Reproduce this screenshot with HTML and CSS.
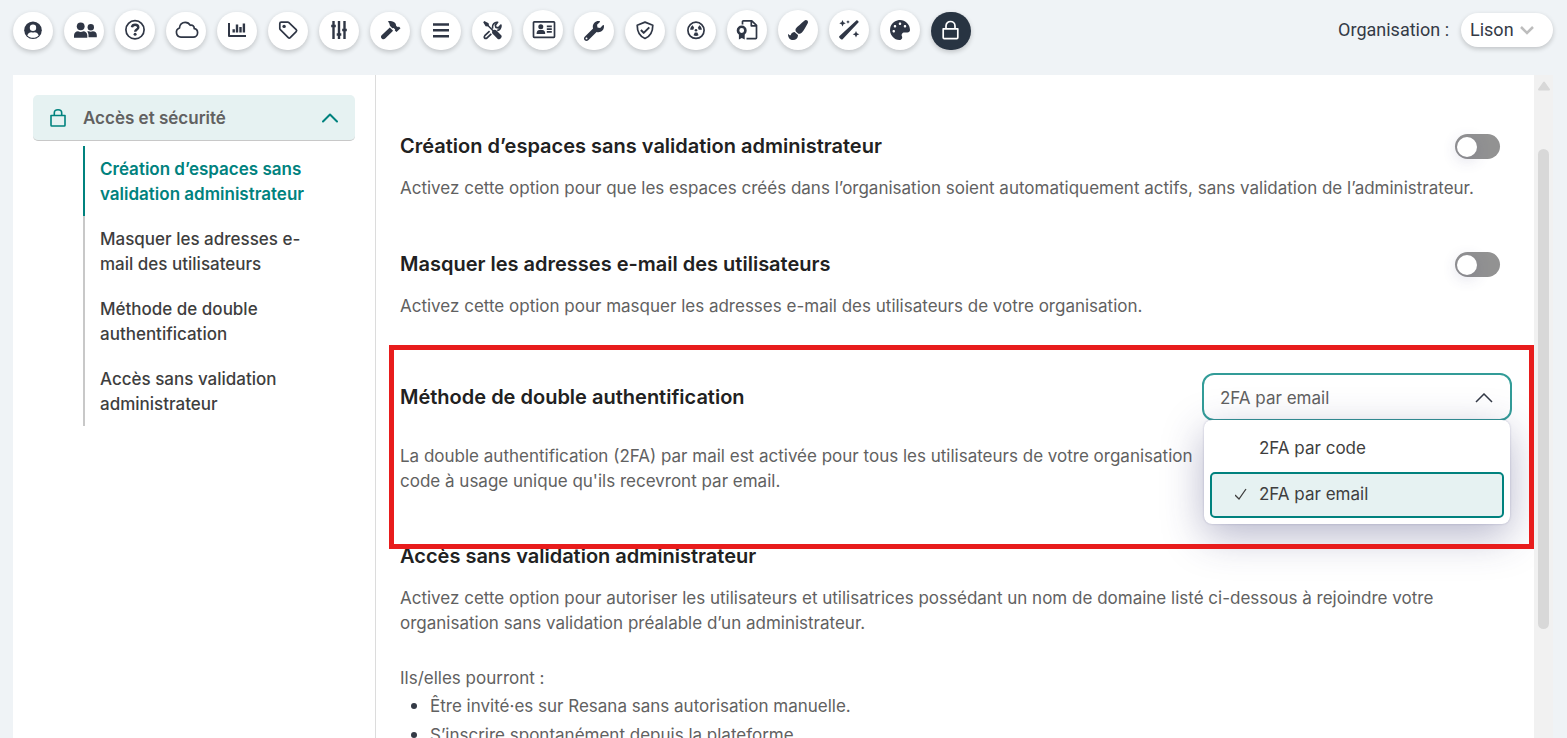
FILE: index.html
```html
<!DOCTYPE html>
<html lang="fr">
<head>
  <meta charset="UTF-8">
  <meta name="viewport" content="width=device-width, initial-scale=1">
  <title>Accès et sécurité</title>
  <link rel="stylesheet" href="styles.css">
</head>
<body>
  <header class="topbar">
    <nav class="tools">
      <a class="tool" href="#" aria-label="Profil"><svg viewBox="0 0 24 24"><circle cx="12" cy="11.3" r="8.8"/><circle class="hole" cx="12" cy="8.8" r="3.2"/><path class="hole" d="M6.3 16.4c.7-2 2.300-3.100 4-3.100.6.200 1.100.300 1.700.300s1.100-.1 1.700-.3c1.700 0 3.300 1.100 4 3.100-1.500 1.500-3.500 2.300-5.700 2.300s-4.200-.8-5.700-2.300z"/></svg></a>
      <a class="tool" href="#" aria-label="Utilisateurs"><svg viewBox="0 0 24 24"><circle cx="8.7" cy="7.300" r="3.900"/><circle cx="18.800" cy="8.200" r="3.200"/><path d="M2 18.700v-2.200c0-2.300 1.800-4.200 4.100-4.200 1.600.8 3.600.8 5.200 0 2.300 0 4 1.900 4 4.200v2.200zM16.500 18.300v-2c0-1.500-.5-2.800-1.300-3.800.5-.2.900-.3 1.400-.3 1.300.6 3 .6 4.300 0 2.200 0 3.900 1.700 3.900 3.900v2.200z"/></svg></a>
      <a class="tool tool-tall" href="#" aria-label="Aide"><svg viewBox="0 0 24 24"><g class="line"><circle cx="12" cy="11.800" r="9.100"/><path class="bold" d="M8.900 9.200c.3-1.500 1.600-2.500 3.200-2.500 1.800 0 3.200 1 3.200 2.700 0 2-3.100 2.200-3.100 4.300"/></g><circle cx="12.100" cy="16.300" r="1.500"/></svg></a>
      <a class="tool" href="#" aria-label="Nuage"><svg viewBox="0 0 24 24"><path class="line" d="M7 18.100a4.700 4.700 0 0 1-1.500-9.100c0-3.200 2.600-5.700 5.700-5.700 2.200 0 4.100 1.200 5.100 3 2.300-.6 4.200 1 3.900 3.400 2 .3 3.400 2 3.400 4 0 2.500-2 4.400-4.400 4.400z"/></svg></a>
      <a class="tool" href="#" aria-label="Statistiques"><svg viewBox="0 0 24 24"><path class="thick" d="M4 4v13h17"/><path class="bold" d="M8.700 13.500v-3.300M12 13.500v-8M15.500 13.500V8M18.900 13.500v-9"/></svg></a>
      <a class="tool" href="#" aria-label="Étiquettes"><svg viewBox="0 0 24 24"><path class="line" d="M3.800 4.500c0-.9.500-1.400 1.400-1.400h6.500c.5 0 .9.200 1.200.5l7.300 7.100c.6.600.6 1.300 0 1.900l-6 6c-.6.600-1.300.6-1.900 0l-8-7.900c-.3-.3-.5-.7-.5-1.100z"/><circle cx="8.100" cy="7.400" r="1.700"/></svg></a>
      <a class="tool" href="#" aria-label="Réglages"><svg viewBox="0 0 24 24"><path class="bold" d="M6.500 2v18M12 2v18M17.500 2v18M4.200 7h4.600M9.700 15.500h4.600M15.200 11h4.600"/></svg></a>
      <a class="tool" href="#" aria-label="Marteau"><svg viewBox="0 0 24 24"><path d="M9.800 2.400c3-.9 6.100-.2 7.900 2.300l.5 2.300 1.900 1.200.8-.6 1.600 1.600-4 3.900-1.700-1.500.4-1-1.600-1.500-1.300.1-2.400-2.500c-.2-2-.9-3.300-2.100-4.300z"/><path d="M11.800 8.500l3.300 3.200-8.200 8.100c-2.200 1.500-5-1.100-3.500-3.300z"/></svg></a>
      <a class="tool" href="#" aria-label="Liste"><svg viewBox="0 0 24 24"><path class="bars" d="M4 5.500h16M4 11.300h16M4 17.200h16"/></svg></a>
      <a class="tool" href="#" aria-label="Outils"><svg viewBox="0 0 24 24"><path d="M4.300 2l4.300 2.200.4 2.300 4.400 4.500c1-.5 2.300-.3 3.100.5l4.700 4.700c1.800 1.800-1.900 5.400-3.700 3.600l-4.600-4.700c-.9-.9-1.100-2.100-.6-3.100L7.900 7.500l-2.300-.3L3.200 3.300z"/><path class="line" d="M12.800 9.600l-.3-.8c-.5-2.900 2-6 5.100-5.500l-2.300 2.800.6 2.200 2.500.6 2.500-2.700c.4 2.700-1.300 4.900-3.700 5.200M9.600 12.200l-4.800 4.500c-1.400 1.600 0 3.300 2 2.500l4.500-4.400"/></svg></a>
      <a class="tool tool-tall" href="#" aria-label="Contacts"><svg viewBox="0 0 24 24"><rect class="line" x="2.500" y="3.800" width="21" height="15.500" rx=".7"/><circle cx="9.800" cy="8.800" r="2.500"/><path d="M5.600 15.900c-.1-2.500 1.100-3.900 2.900-3.900h2.800c1.800 0 3 1.400 2.900 3.900z"/><path class="line" d="M15.800 8.300h5M15.800 11.100h5M15.800 13.900h5"/></svg></a>
      <a class="tool" href="#" aria-label="Maintenance"><svg class="solid" viewBox="0 0 512 512"><path d="M507.730 109.100c-2.240-9.030-13.540-12.090-20.120-5.510l-74.360 74.360-67.880-11.310-11.310-67.880 74.360-74.360c6.620-6.620 3.430-17.900-5.660-20.160-47.380-11.740-99.550.91-136.580 37.930-39.640 39.640-50.550 97.100-34.050 147.200L18.740 402.760c-24.990 24.990-24.990 65.510 0 90.500 24.990 24.990 65.510 24.990 90.500 0l213.210-213.210c50.120 16.710 107.470 5.680 147.370-34.220 37.070-37.070 49.700-89.320 37.910-136.730zM64 472c-13.250 0-24-10.750-24-24 0-13.260 10.750-24 24-24s24 10.740 24 24c0 13.250-10.750 24-24 24z"/></svg></a>
      <a class="tool" href="#" aria-label="Protection"><svg viewBox="0 0 24 24"><path class="line" d="M12 3.100l7.800 3.100c0 6.100-2.800 11.200-7.800 13.300-5-2.100-7.800-7.200-7.800-13.300z"/><path class="thick" d="M7.900 11l2.800 2.900 5.600-5.500"/></svg></a>
      <a class="tool" href="#" aria-label="Risques"><svg viewBox="0 0 24 24"><circle class="line" cx="12" cy="11.300" r="8.100"/><circle cx="12" cy="11.200" r="1.300"/><path d="M6.200 10.700c.1-1.800 1-3.400 2.500-4.400l1.500 2.600c-.5.400-.9 1-.9 1.800zM17.800 10.700c-.1-1.800-1-3.400-2.500-4.400l-1.500 2.600c.5.400.9 1 .9 1.800zM9.500 16.200c1.600 1 3.600 1 5.100 0l-1.300-2.800h-2.500z"/></svg></a>
      <a class="tool tool-tall" href="#" aria-label="Certificats"><svg viewBox="0 0 24 24"><path class="line" d="M7.500 6.500V3.700c0-.6.300-.9.900-.9h8.400l4.700 4.500v12.500c0 .6-.4.900-.9.900H11.500M16.300 2.800V7.800h5"/><circle class="ring" cx="6.700" cy="12.500" r="3.700"/><path d="M3.900 15.500h5.800V21.400l-2.900-1.500-2.900 1.500z"/></svg></a>
      <a class="tool tool-tall" href="#" aria-label="Apparence"><svg class="solid" viewBox="0 0 512 512"><path d="M167.020 309.340c-40.120 2.580-76.530 17.860-97.190 72.300-2.350 6.210-8 9.980-14.590 9.980-11.110 0-45.460-27.670-55.250-34.350C0 439.620 37.930 512 128 512c75.860 0 128-43.770 128-120.190 0-3.110-.65-6.080-.97-9.130l-88.010-73.340zM457.890 0c-15.160 0-29.370 6.710-40.210 16.450C213.270 199.050 192 203.340 192 257.090c0 13.700 3.250 26.760 8.730 38.700l63.820 53.180c7.210 1.800 14.640 3.030 22.390 3.030 62.110 0 98.110-45.470 211.160-256.460 7.380-14.350 13.900-29.850 13.900-45.990C512 20.640 486 0 457.890 0z"/></svg></a>
      <a class="tool tool-tall" href="#" aria-label="Assistant"><svg viewBox="0 0 24 24"><path d="M19.600 2.300c.5-.5 2.600 1.400 2 2L5.600 21.300c-.9.900-4.300-2-3.300-3.100z"/><path d="M5.500 2l1 2.200 2.200 1-2.200 1-1 2.300-1-2.300-2.200-1 2.200-1zM11 2.200l.6 1.100 1.200.6-1.200.6-.6 1.200-.6-1.200-1.200-.6 1.200-.6zM19 13l1 2.200 2.300 1-2.300 1-1 2.200-1-2.200-2.300-1 2.300-1z"/></svg></a>
      <a class="tool tool-tall" href="#" aria-label="Couleurs"><svg class="solid" viewBox="0 0 512 512"><path d="M204.300 5C104.900 24.400 24.800 104.300 5.200 203.400c-37 187 131.700 326.400 258.800 306.700 41.200-6.400 61.400-54.600 42.500-91.700-23.100-45.400 9.900-98.400 60.900-98.400h79.700c35.800 0 64.800-29.600 64.900-65.300C511.500 97.100 368.100-26.900 204.300 5zM96 320c-17.700 0-32-14.300-32-32s14.300-32 32-32 32 14.300 32 32-14.300 32-32 32zm32-128c-17.700 0-32-14.300-32-32s14.300-32 32-32 32 14.300 32 32-14.300 32-32 32zm128-64c-17.700 0-32-14.300-32-32s14.300-32 32-32 32 14.300 32 32-14.300 32-32 32zm128 64c-17.700 0-32-14.300-32-32s14.300-32 32-32 32 14.300 32 32-14.300 32-32 32z"/></svg></a>
      <a class="tool tool-active" href="#" aria-label="Sécurité"><svg viewBox="0 0 24 24"><path class="line" d="M4.200 9.800h14.600v8.800c0 .7-.4 1-1 1H5.200c-.6 0-1-.3-1-1zM7 9.600V7c0-6 9-6 9 0v2.600"/></svg></a>
    </nav>
    <div class="organisation">
      <label for="org">Organisation :</label>
      <div class="org-box">
        <select id="org" class="org-select"><option>Lison</option></select>
        <svg class="org-arrow" viewBox="0 0 14 10"><path d="M1 2l6 6 6-6"/></svg>
      </div>
    </div>
  </header>

  <main class="panel">
    <aside class="sidebar">
      <button class="group" type="button">
        <svg class="group-lock" viewBox="0 0 18 20"><path d="M2 7.500h14v9.700c0 .5-.3.800-.8.800H2.800c-.5 0-.8-.3-.8-.8zM5.300 7.500V5c0-4.300 7.400-4.300 7.400 0v2.500"/></svg>
        <span class="group-name">Accès et sécurité</span>
        <svg class="group-arrow" viewBox="0 0 16 10"><path d="M1 8.500l7-7 7 7"/></svg>
      </button>
      <nav class="menu">
        <a class="menu-item menu-current" href="#creation">Création d’espaces sans validation administrateur</a>
        <a class="menu-item" href="#adresses">Masquer les adresses e-mail des utilisateurs</a>
        <a class="menu-item" href="#methode">Méthode de double authentification</a>
        <a class="menu-item" href="#acces">Accès sans validation administrateur</a>
      </nav>
    </aside>

    <div class="content">
      <section class="setting" id="creation">
        <div class="setting-head">
          <h2><label for="t-creation">Création d’espaces sans validation administrateur</label></h2>
          <input id="t-creation" class="toggle" type="checkbox">
        </div>
        <p>Activez cette option pour que les espaces créés dans l’organisation soient automatiquement actifs, sans validation de l’administrateur.</p>
      </section>

      <section class="setting" id="adresses">
        <div class="setting-head">
          <h2><label for="t-adresses">Masquer les adresses e-mail des utilisateurs</label></h2>
          <input id="t-adresses" class="toggle" type="checkbox">
        </div>
        <p>Activez cette option pour masquer les adresses e-mail des utilisateurs de votre organisation.</p>
      </section>

      <section class="setting setting-2fa" id="methode">
        <div class="setting-head">
          <h2><label for="methode-2fa">Méthode de double authentification</label></h2>
          <div class="dropdown">
            <select id="methode-2fa" class="dropdown-select">
              <option>2FA par code</option>
              <option selected>2FA par email</option>
            </select>
            <svg class="dropdown-arrow" viewBox="0 0 18 10"><path d="M1 9l8-8 8 8"/></svg>
            <div class="dropdown-list">
              <button class="choice" type="button">2FA par code</button>
              <button class="choice choice-on" type="button"><svg class="check" viewBox="0 0 12 12"><path d="M0 7l4 4 7-10"/></svg>2FA par email</button>
            </div>
          </div>
        </div>
        <p>La double authentification (2FA) par mail est activée pour tous les utilisateurs de votre organisation<br>code à usage unique qu'ils recevront par email.</p>
        <div class="highlight"></div>
      </section>

      <section class="setting" id="acces">
        <div class="setting-head">
          <h2>Accès sans validation administrateur</h2>
        </div>
        <p>Activez cette option pour autoriser les utilisateurs et utilisatrices possédant un nom de domaine listé ci-dessous à rejoindre votre organisation sans validation préalable d’un administrateur.</p>
        <p class="intro">Ils/elles pourront :</p>
        <ul class="rights">
          <li>Être invité·es sur Resana sans autorisation manuelle.</li>
          <li>S’inscrire spontanément depuis la plateforme.</li>
        </ul>
      </section>
    </div>

    <div class="scrollbar">
      <svg class="scroll-up" viewBox="0 0 12 10"><path d="M6 1.500L11 8.500H1z"/></svg>
      <div class="scroll-thumb"></div>
    </div>
  </main>
</body>
</html>
```

FILE: styles.css
```css
* {
  box-sizing: border-box;
}
body {
  margin: 0;
  height: 100vh;
  display: flex;
  flex-direction: column;
  overflow: hidden;
  background: #eff3f6;
  color: #343a46;
  font-family: Inter, "Liberation Sans", sans-serif;
  font-size: 17px;
  line-height: 25px;
}
button, select {
  font: inherit;
  color: inherit;
}

/* top bar */
.topbar {
  display: flex;
  justify-content: space-between;
  align-items: flex-start;
  padding: 10px 14px 25px 13px;
}
.tools {
  display: flex;
  align-items: flex-end;
  gap: 11px;
}
.tool {
  width: 40px;
  height: 38px;
  display: flex;
  align-items: center;
  justify-content: center;
  border-radius: 20px;
  background: #fff;
  color: #2f3645;
  box-shadow: 0 2px 5px rgba(0, 0, 0, 0.2);
}
.tool-tall {
  height: 40px;
}
.tool-active {
  background: #283442;
  color: #fff;
}
.tool svg {
  width: 24px;
  height: 24px;
  overflow: visible;
  fill: currentColor;
}
.tool .solid {
  width: 20px;
  height: 20px;
}
.tool .line, .tool .thick, .tool .ring, .tool .bars, .tool .bold {
  fill: none;
  stroke: currentColor;
  stroke-width: 1.7;
  stroke-linejoin: round;
}
.tool .thick {
  stroke-width: 2;
}
.tool .ring, .tool .bars {
  stroke-width: 2.6;
}
.tool .bold {
  stroke-width: 2.4;
}
.tool .hole {
  fill: #fff;
}
.organisation {
  display: flex;
  align-items: center;
  gap: 12px;
  padding-top: 3px;
  font-family: Roboto, "Liberation Sans", sans-serif;
  font-size: 18px;
}
.organisation label {
  padding-bottom: 2px;
}
.org-box {
  position: relative;
}
.org-select {
  appearance: none;
  display: block;
  width: 92px;
  height: 34px;
  padding: 0 9px 2px;
  border: 0;
  border-radius: 17px;
  background: #fff;
  box-shadow: 0 2px 5px rgba(0, 0, 0, 0.2);
}
.org-arrow {
  position: absolute;
  top: 12px;
  right: 19px;
  width: 14px;
  height: 10px;
  fill: none;
  stroke: #bdbdbd;
  stroke-width: 2.5;
  pointer-events: none;
}

/* main panel */
.panel {
  flex: 1;
  min-height: 0;
  display: flex;
  margin: 0 14px 0 13px;
  background: #fff;
}
.sidebar {
  flex: none;
  width: 363px;
  padding: 20px;
  border-right: 1px solid #dcdcdc;
}
.group {
  width: 100%;
  height: 46px;
  display: flex;
  align-items: center;
  padding: 0 17px 0 16px;
  border: 0;
  border-bottom: 1px solid #c8c8c8;
  border-radius: 5px;
  background: #e6f2f2;
  color: #616161;
  font-weight: 600;
  text-align: left;
}
.group-name {
  flex: 1;
  padding: 2px 0 0 16px;
}
.group-lock, .group-arrow {
  fill: none;
  stroke: #00827e;
  stroke-width: 1.6;
  stroke-linejoin: round;
  stroke-linecap: round;
}
.group-lock {
  width: 18px;
  height: 20px;
}
.group-arrow {
  width: 16px;
  height: 10px;
  stroke-width: 2;
}
.menu {
  margin: 5px 0 0 50px;
}
.menu-item {
  display: block;
  padding: 11px 30px 9px 15px;
  border-left: 2px solid #c8c8c8;
  color: #3e3e3e;
  font-weight: 500;
  text-decoration: none;
}
.menu-current {
  border-color: #00827e;
  color: #00827e;
  font-weight: 600;
}

/* settings */
.content {
  flex: 1;
  min-width: 0;
  overflow: hidden;
  padding: 59px 22px 0 24px;
}
.setting {
  margin-bottom: 51px;
}
.setting-head {
  display: flex;
  justify-content: space-between;
  align-items: center;
}
h2 {
  margin: 0;
  color: #212121;
  font-size: 20px;
  font-weight: 600;
  line-height: 25px;
}
.setting p {
  margin: 17px 0 0;
  color: #616161;
}
.toggle {
  appearance: none;
  width: 45px;
  height: 25px;
  margin: 0 12px 0 0;
  padding: 3px 2px;
  border-radius: 13px;
  background: #929292;
}
.toggle::before {
  content: "";
  display: block;
  width: 20px;
  height: 20px;
  border-radius: 50%;
  background: #fff;
  box-shadow: 0 3px 16px rgba(60, 60, 120, 0.2);
}
.setting-2fa {
  position: relative;
  margin: 54px 0 50px;
}
.setting-2fa p {
  margin-top: 23px;
}
.highlight {
  position: absolute;
  inset: -28px -22px -55px -11px;
  border: 5px solid #e81c1c;
  pointer-events: none;
}
.dropdown {
  position: relative;
  width: 310px;
}
.dropdown-select {
  appearance: none;
  display: block;
  width: 100%;
  height: 48px;
  padding: 2px 16px 0;
  border: 2px solid #329c98;
  border-radius: 12px;
  background: #fff;
  color: #616161;
}
.dropdown-arrow {
  position: absolute;
  top: 20px;
  right: 19px;
  width: 18px;
  height: 10px;
  fill: none;
  stroke: #343a46;
  stroke-width: 1.5;
  pointer-events: none;
}
.dropdown-list {
  position: absolute;
  top: 47px;
  left: 2px;
  right: 2px;
  padding: 6px;
  border-radius: 8px;
  background: #fff;
  box-shadow: 0 0 2px rgba(50, 50, 110, 0.3), 0 12px 40px rgba(50, 50, 110, 0.35);
}
.choice {
  position: relative;
  display: block;
  width: 100%;
  height: 46px;
  padding: 0 47px 2px;
  border: 2px solid transparent;
  border-radius: 5px;
  background: none;
  color: #3e3e3e;
  text-align: left;
}
.choice-on {
  border-color: #00827e;
  background: #e6f2f2;
}
.check {
  position: absolute;
  top: 14px;
  left: 23px;
  width: 12px;
  height: 12px;
  fill: none;
  stroke: #3e3e3e;
  stroke-width: 1.3;
}
.setting .intro {
  margin-top: 30px;
}
.rights {
  margin: 0;
  padding-left: 30px;
  color: #616161;
  line-height: 28px;
}
.rights li::marker {
  color: #343a46;
  font-size: 20px;
}

/* scrollbar */
.scrollbar {
  flex: none;
  width: 19px;
  padding-top: 6px;
  background: #f1f1f1;
}
.scroll-up {
  display: block;
  width: 12px;
  height: 10px;
  margin: 0 auto;
  fill: #d8d8d8;
  stroke: #d8d8d8;
  stroke-width: 2;
  stroke-linejoin: round;
}
.scroll-thumb {
  width: 11px;
  height: 73%;
  margin: 58px auto 0;
  border-radius: 6px;
  background: #d8d8d8;
}
```
